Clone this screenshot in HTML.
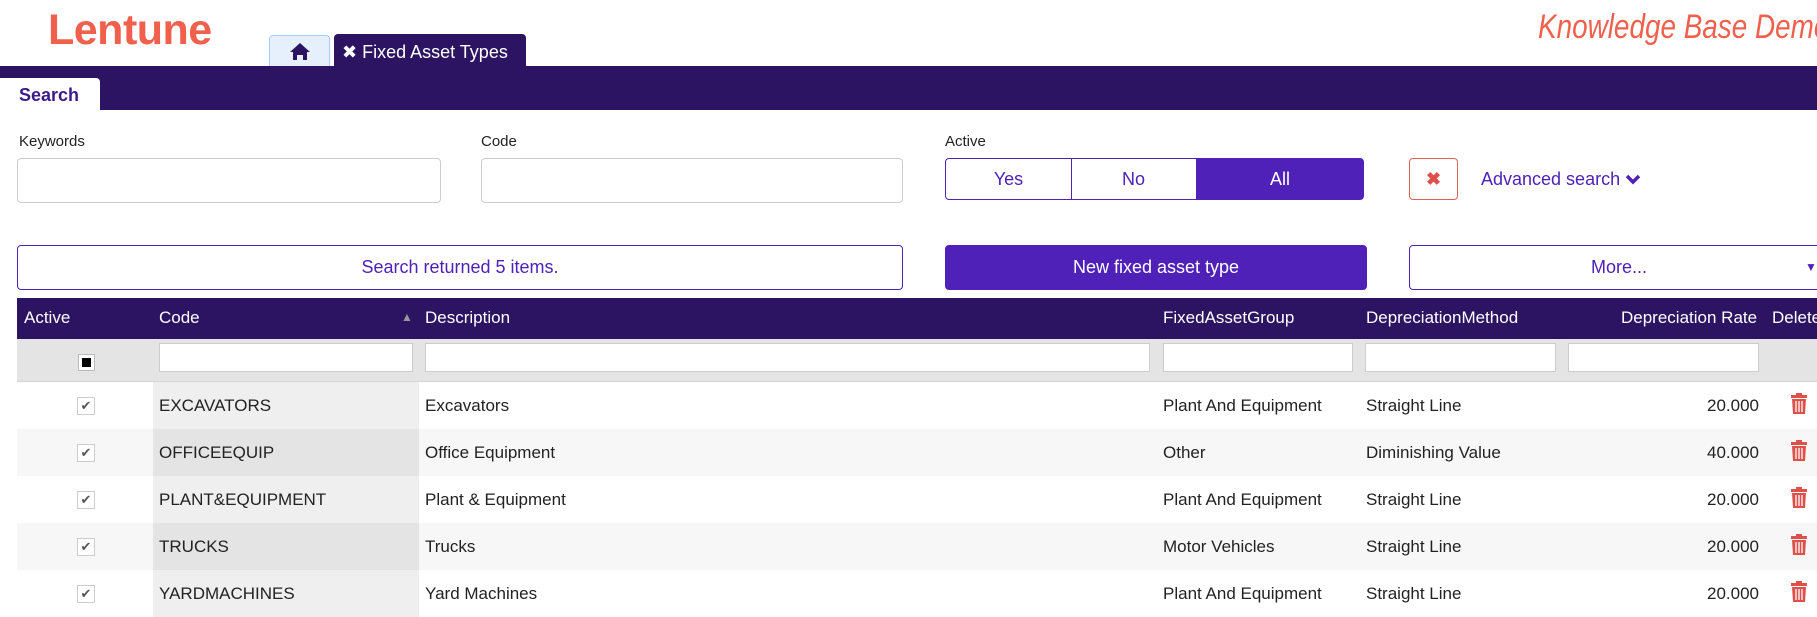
<!DOCTYPE html>
<html><head><meta charset="utf-8"><style>
*{box-sizing:border-box;margin:0;padding:0}
body{width:1817px;height:609px;overflow:hidden;background:#fff;font-family:"Liberation Sans",sans-serif;position:relative;color:#222}
.a{position:absolute}
.logo{left:48px;top:6px;font-size:43px;font-weight:bold;color:#f0604d;letter-spacing:-0.5px}
.kb{left:1538px;top:8px;font-size:34px;font-style:italic;color:#f0604d;white-space:nowrap;transform:scaleX(0.82);transform-origin:left top}
.bar{left:0;top:66px;width:1817px;height:44px;background:#2c1462}
.home{left:269px;top:35px;width:61px;height:32px;background:#e6f0fd;border:1px solid #a9cdf5;border-bottom:none;border-radius:4px 4px 0 0}
.tab{left:334px;top:34px;width:192px;height:33px;background:#2c1462;border-radius:4px 4px 0 0;color:#fff;font-size:18px;padding:8px 0 0 8px}
.stab{left:0;top:78px;width:100px;height:32px;background:#fff;border-radius:0 4px 0 0;color:#3b1a8c;font-weight:bold;font-size:18px;padding:7px 0 0 19px}
.lbl{font-size:15px;color:#222;top:133px}
.inp{top:158px;height:45px;border:1px solid #ccc;border-radius:4px;background:#fff}
.tg{top:158px;height:42px;border:1px solid #4f21b8;color:#4f21b8;font-size:18px;text-align:center;line-height:40px}
.btn{top:245px;height:45px;border:1px solid #4f21b8;border-radius:4px;color:#4f21b8;font-size:18px;text-align:center;line-height:43px}
.th{top:298px;left:17px;width:1800px;height:41px;background:#2c1462}
.th span{position:absolute;top:10px;color:#fff;font-size:17px;white-space:nowrap}
.fr{top:339px;left:17px;width:1800px;height:43px;background:#e4e4e4;border-bottom:1px solid #d4d4d4}
.fi{position:absolute;top:4px;height:29px;background:#fff;border:1px solid #ccc}
.row{left:17px;width:1800px;height:47px}
.row span{position:absolute;top:14px;font-size:17px;color:#222;white-space:nowrap}
.cb{position:absolute;left:60px;top:15px;width:18px;height:18px;border:1px solid #ccc;background:#fff;font-size:13px;color:#555;text-align:center;line-height:16px}
.cc{position:absolute;left:136px;top:0;width:266px;height:47px}
</style></head><body>
<div class="a logo">Lentune</div>
<div class="a kb">Knowledge Base Demo</div>
<div class="a home"><svg width="61" height="32" viewBox="0 0 61 32"><path d="M30 7 L40 16 H37 V24 H33 V19 H27 V24 H23 V16 H20 Z" fill="#2c1462"/></svg></div>
<div class="a tab">✖ Fixed Asset Types</div>
<div class="a bar"></div>
<div class="a stab">Search</div>

<div class="a lbl" style="left:19px">Keywords</div>
<div class="a inp" style="left:17px;width:424px"></div>
<div class="a lbl" style="left:481px">Code</div>
<div class="a inp" style="left:481px;width:422px"></div>
<div class="a lbl" style="left:945px">Active</div>
<div class="a tg" style="left:945px;width:127px;border-radius:4px 0 0 4px">Yes</div>
<div class="a tg" style="left:1071px;width:126px;border-left:none">No</div>
<div class="a tg" style="left:1196px;width:168px;background:#4f21b8;color:#fff;border-radius:0 4px 4px 0">All</div>
<div class="a" style="left:1409px;top:158px;width:49px;height:42px;border:1px solid #e06055;border-radius:4px;color:#e0504a;font-size:18px;text-align:center;line-height:40px;font-weight:bold">✖</div>
<div class="a" style="left:1481px;top:169px;font-size:18px;color:#4f21b8">Advanced search <svg width="16" height="12" viewBox="0 0 16 12"><path d="M2 3 L8 9 L14 3" stroke="#4f21b8" stroke-width="3.5" fill="none"/></svg></div>

<div class="a btn" style="left:17px;width:886px">Search returned 5 items.</div>
<div class="a btn" style="left:945px;width:422px;background:#4f21b8;color:#fff">New fixed asset type</div>
<div class="a btn" style="left:1409px;width:420px">More...<span style="position:absolute;left:395px;top:0;font-size:12px">▼</span></div>

<div class="a th">
<span style="left:7px">Active</span><span style="left:142px">Code</span>
<span style="left:384px;top:12px;color:#999;font-size:12px">▲</span>
<span style="left:408px">Description</span><span style="left:1146px">FixedAssetGroup</span>
<span style="left:1349px">DepreciationMethod</span><span style="left:1604px">Depreciation Rate</span><span style="left:1755px">Delete</span>
</div>
<div class="a fr">
<div style="position:absolute;left:61px;top:15px;width:17px;height:17px;border:1px solid #bbb;background:#fff;padding:3px"><div style="width:9px;height:9px;background:#000"></div></div>
<div class="fi" style="left:142px;width:254px"></div>
<div class="fi" style="left:408px;width:725px"></div>
<div class="fi" style="left:1146px;width:190px"></div>
<div class="fi" style="left:1348px;width:191px"></div>
<div class="fi" style="left:1551px;width:191px"></div>
</div>

<div class="a row" style="top:382px;background:#fff"><div class="cc" style="background:#efefef"></div><div class="cb">✔</div><span style="left:142px">EXCAVATORS</span><span style="left:408px">Excavators</span><span style="left:1146px">Plant And Equipment</span><span style="left:1349px">Straight Line</span><span style="right:58px">20.000</span><svg class="a" style="left:1773px;top:10px" width="18" height="23" viewBox="0 0 18 23"><path d="M6 1h6v2h5v3H1V3h5z M2 7h14l-1 15H3z" fill="#e0504a"/><path d="M6 9v11M9 9v11M12 9v11" stroke="#fff" stroke-width="1.3"/></svg></div>
<div class="a row" style="top:429px;background:#f7f7f7"><div class="cc" style="background:#e4e4e4"></div><div class="cb">✔</div><span style="left:142px">OFFICEEQUIP</span><span style="left:408px">Office Equipment</span><span style="left:1146px">Other</span><span style="left:1349px">Diminishing Value</span><span style="right:58px">40.000</span><svg class="a" style="left:1773px;top:10px" width="18" height="23" viewBox="0 0 18 23"><path d="M6 1h6v2h5v3H1V3h5z M2 7h14l-1 15H3z" fill="#e0504a"/><path d="M6 9v11M9 9v11M12 9v11" stroke="#fff" stroke-width="1.3"/></svg></div>
<div class="a row" style="top:476px;background:#fff"><div class="cc" style="background:#efefef"></div><div class="cb">✔</div><span style="left:142px">PLANT&amp;EQUIPMENT</span><span style="left:408px">Plant &amp; Equipment</span><span style="left:1146px">Plant And Equipment</span><span style="left:1349px">Straight Line</span><span style="right:58px">20.000</span><svg class="a" style="left:1773px;top:10px" width="18" height="23" viewBox="0 0 18 23"><path d="M6 1h6v2h5v3H1V3h5z M2 7h14l-1 15H3z" fill="#e0504a"/><path d="M6 9v11M9 9v11M12 9v11" stroke="#fff" stroke-width="1.3"/></svg></div>
<div class="a row" style="top:523px;background:#f7f7f7"><div class="cc" style="background:#e4e4e4"></div><div class="cb">✔</div><span style="left:142px">TRUCKS</span><span style="left:408px">Trucks</span><span style="left:1146px">Motor Vehicles</span><span style="left:1349px">Straight Line</span><span style="right:58px">20.000</span><svg class="a" style="left:1773px;top:10px" width="18" height="23" viewBox="0 0 18 23"><path d="M6 1h6v2h5v3H1V3h5z M2 7h14l-1 15H3z" fill="#e0504a"/><path d="M6 9v11M9 9v11M12 9v11" stroke="#fff" stroke-width="1.3"/></svg></div>
<div class="a row" style="top:570px;background:#fff"><div class="cc" style="background:#efefef"></div><div class="cb">✔</div><span style="left:142px">YARDMACHINES</span><span style="left:408px">Yard Machines</span><span style="left:1146px">Plant And Equipment</span><span style="left:1349px">Straight Line</span><span style="right:58px">20.000</span><svg class="a" style="left:1773px;top:10px" width="18" height="23" viewBox="0 0 18 23"><path d="M6 1h6v2h5v3H1V3h5z M2 7h14l-1 15H3z" fill="#e0504a"/><path d="M6 9v11M9 9v11M12 9v11" stroke="#fff" stroke-width="1.3"/></svg></div>
</body></html>
